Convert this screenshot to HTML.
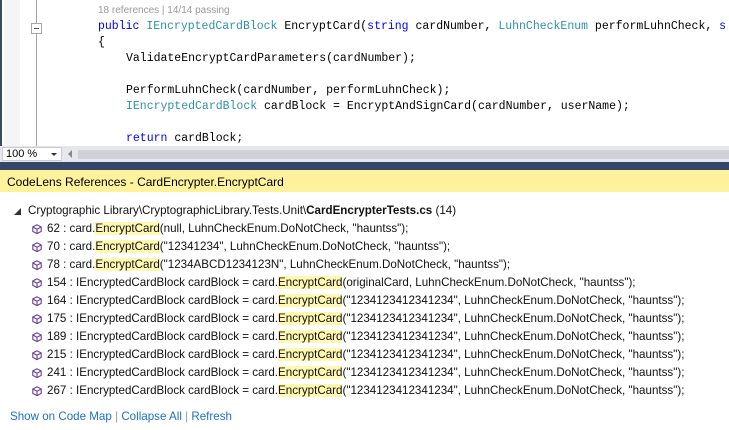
<!DOCTYPE html>
<html><head><style>
*{margin:0;padding:0;box-sizing:border-box}
body{width:729px;height:430px;overflow:hidden;background:#fff;position:relative;font-family:"Liberation Sans",sans-serif}
.code{position:absolute;left:0;top:0;width:729px;height:146px;background:#fff;border-left:2px solid #3b4a66}
.gut{position:absolute;left:2px;top:0;width:16px;height:146px;background:#f5f5f5}
.vline{position:absolute;left:34px;top:0;height:146px;border-left:1px solid #a5a5a5}
.fold{position:absolute;left:29px;top:23px;width:11px;height:11px;border:1px solid #a5a5a5;background:#fff}
.fold:after{content:"";position:absolute;left:2px;top:4px;width:5px;height:1px;background:#555}
.cl{position:absolute;font-family:"Liberation Mono",monospace;font-size:11.5px;white-space:pre;color:#000;line-height:16px}
.kw{color:#0000ff}.ty{color:#2b91af}
.lens{position:absolute;left:96px;top:5px;font-size:10px;color:#999}
.bar{position:absolute;left:0;top:146px;width:729px;height:16px;background:#e6e7ec}
.zoom{position:absolute;left:2px;top:147px;width:60px;height:14px;border:1px solid #ccc;background:#fff;font-size:11px;padding-left:3px;line-height:12px}
.zoom:after{content:"";position:absolute;right:4px;top:5px;border:3px solid transparent;border-top:3px solid #333}
.thumb{position:absolute;left:78px;top:150px;width:654px;height:9px;background:#d0d1d6}
.arr{position:absolute;left:68px;top:150px;border:4px solid transparent;border-right:4px solid #888;border-left:0}
.dark{position:absolute;left:0;top:162px;width:729px;height:8px;background:#364667}
.hdr{position:absolute;left:0;top:170px;width:729px;height:22px;background:#fff29d;font-size:12px;padding-left:7px;line-height:24px}
.row{position:absolute;font-size:11.6px;white-space:pre;line-height:16px;color:#111}
.hl{background:#fff8b0}
.foot{position:absolute;left:10px;top:409px;font-size:11.6px;color:#1e6fc9;white-space:pre;line-height:16px}
.sep{color:#999}
</style></head><body>
<div class="code">
<div class="gut"></div><div class="vline"></div><div class="fold"></div>
<div class="lens">18 references | 14/14 passing</div>
<div class="cl" style="left:96px;top:19px"><span class="kw">public</span> <span class="ty">IEncryptedCardBlock</span> EncryptCard(<span class="kw">string</span> cardNumber, <span class="ty">LuhnCheckEnum</span> performLuhnCheck, <span class="kw">s</span></div>
<div class="cl" style="left:96px;top:35px">{</div>
<div class="cl" style="left:124px;top:51px">ValidateEncryptCardParameters(cardNumber);</div>
<div class="cl" style="left:124px;top:83px">PerformLuhnCheck(cardNumber, performLuhnCheck);</div>
<div class="cl" style="left:124px;top:99px"><span class="ty">IEncryptedCardBlock</span> cardBlock = EncryptAndSignCard(cardNumber, userName);</div>
<div class="cl" style="left:124px;top:131px"><span class="kw">return</span> cardBlock;</div>
</div>
<div class="bar"></div><div class="zoom">100 %</div><div class="arr"></div><div class="thumb"></div>
<div class="dark"></div>
<div class="hdr">CodeLens References - CardEncrypter.EncryptCard</div>
<div style="position:absolute;left:14px;top:208px;width:0;height:0;border-left:7px solid transparent;border-bottom:7px solid #333"></div>
<div class="row" style="left:28px;top:203px">Cryptographic Library\CryptographicLibrary.Tests.Unit\<b>CardEncrypterTests.cs</b> (14)</div>
<svg width="0" height="0" style="position:absolute"><defs><g id="cube"><path d="M5 0.8 L9.2 3 L9.2 7.4 L5 9.6 L0.8 7.4 L0.8 3 Z M0.8 3 L5 5.2 L9.2 3 M5 5.2 L5 9.6" fill="none" stroke="#6c3f9c" stroke-width="1.1"/></g></defs></svg>
<div class="row" style="left:47px;top:221px">62 : card.<span class="hl">EncryptCard</span>(null, LuhnCheckEnum.DoNotCheck, "hauntss");</div>
<div class="row" style="left:47px;top:239px">70 : card.<span class="hl">EncryptCard</span>("12341234", LuhnCheckEnum.DoNotCheck, "hauntss");</div>
<div class="row" style="left:47px;top:257px">78 : card.<span class="hl">EncryptCard</span>("1234ABCD1234123N", LuhnCheckEnum.DoNotCheck, "hauntss");</div>
<div class="row" style="left:47px;top:275px">154 : IEncryptedCardBlock cardBlock = card.<span class="hl">EncryptCard</span>(originalCard, LuhnCheckEnum.DoNotCheck, "hauntss");</div>
<div class="row" style="left:47px;top:293px">164 : IEncryptedCardBlock cardBlock = card.<span class="hl">EncryptCard</span>("1234123412341234", LuhnCheckEnum.DoNotCheck, "hauntss");</div>
<div class="row" style="left:47px;top:311px">175 : IEncryptedCardBlock cardBlock = card.<span class="hl">EncryptCard</span>("1234123412341234", LuhnCheckEnum.DoNotCheck, "hauntss");</div>
<div class="row" style="left:47px;top:329px">189 : IEncryptedCardBlock cardBlock = card.<span class="hl">EncryptCard</span>("1234123412341234", LuhnCheckEnum.DoNotCheck, "hauntss");</div>
<div class="row" style="left:47px;top:347px">215 : IEncryptedCardBlock cardBlock = card.<span class="hl">EncryptCard</span>("1234123412341234", LuhnCheckEnum.DoNotCheck, "hauntss");</div>
<div class="row" style="left:47px;top:365px">241 : IEncryptedCardBlock cardBlock = card.<span class="hl">EncryptCard</span>("1234123412341234", LuhnCheckEnum.DoNotCheck, "hauntss");</div>
<div class="row" style="left:47px;top:383px">267 : IEncryptedCardBlock cardBlock = card.<span class="hl">EncryptCard</span>("1234123412341234", LuhnCheckEnum.DoNotCheck, "hauntss");</div>
<svg style="position:absolute;left:32px;top:224px" width="10" height="190"><use href="#cube" y="0"/><use href="#cube" y="18"/><use href="#cube" y="36"/><use href="#cube" y="54"/><use href="#cube" y="72"/><use href="#cube" y="90"/><use href="#cube" y="108"/><use href="#cube" y="126"/><use href="#cube" y="144"/><use href="#cube" y="162"/></svg>
<div class="foot">Show on Code Map<span class="sep"> | </span>Collapse All<span class="sep"> | </span>Refresh</div>
</body></html>
